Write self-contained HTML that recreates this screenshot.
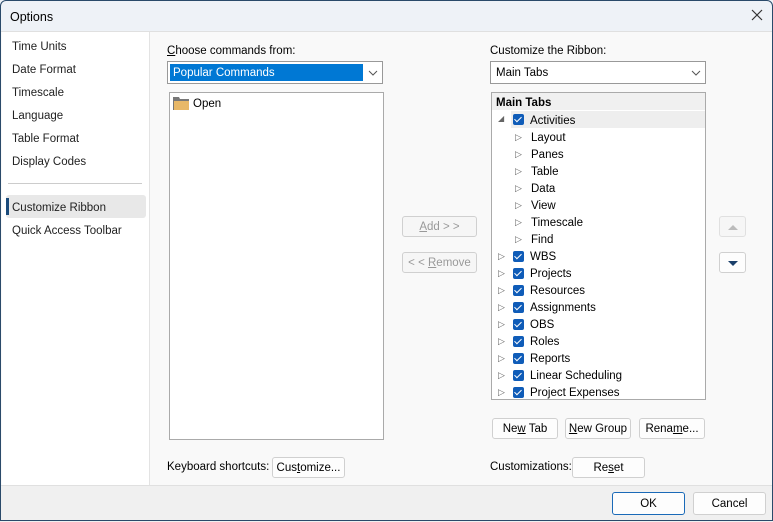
<!DOCTYPE html><html><head><style>
body{margin:0;width:773px;height:521px;overflow:hidden;font-family:"Liberation Sans",sans-serif;font-size:11.5px;color:#000;background:#f9f9f9;position:relative}
.a{position:absolute}
.t{margin-top:1px}
.btn{position:absolute;background:#fdfdfd;border:1px solid #d0d0d0;border-radius:3px;text-align:center;box-sizing:border-box;line-height:21px}
.nav{position:absolute;left:12px;color:#222;margin-top:1px}
.cb{position:absolute;width:11px;height:11px;background:#0f5cb8;border-radius:2px;margin-top:1px}
.cb:after{content:"";position:absolute;left:3px;top:1px;width:3px;height:6px;border:solid #fff;border-width:0 1px 1px 0;transform:rotate(45deg)}
.tri{position:absolute;color:#666;font-size:9px}
</style></head><body>
<div class="a" style="left:0;top:0;width:773px;height:31px;background:#eef2f7;border-bottom:1px solid #e0e0e0"></div>
<div class="a" style="left:10px;top:10px;font-size:12.5px">Options</div>
<svg class="a" style="left:751px;top:9px" width="12" height="12"><path d="M1 1L11 11M11 1L1 11" stroke="#333" stroke-width="1.2"/></svg>
<div class="a" style="left:2px;top:32px;width:147px;height:454px;background:#fff;border-right:1px solid #e3e3e3"></div>
<div class="nav" style="top:40px">Time Units</div>
<div class="nav" style="top:63px">Date Format</div>
<div class="nav" style="top:86px">Timescale</div>
<div class="nav" style="top:109px">Language</div>
<div class="nav" style="top:132px">Table Format</div>
<div class="nav" style="top:155px">Display Codes</div>
<div class="a" style="left:8px;top:183px;width:134px;height:1px;background:#ccc"></div>
<div class="a" style="left:6px;top:195px;width:140px;height:23px;background:#e8e8e8;border-radius:3px"></div>
<div class="a" style="left:6px;top:198px;width:3px;height:17px;background:#1a4a7a"></div>
<div class="nav" style="top:201px">Customize Ribbon</div>
<div class="nav" style="top:224px">Quick Access Toolbar</div>

<div class="a t" style="left:167px;top:44px"><u>C</u>hoose commands from:</div>
<div class="a" style="left:167px;top:61px;width:216px;height:23px;background:#fff;border:1px solid #999;box-sizing:border-box"></div>
<div class="a" style="left:170px;top:64px;width:193px;height:17px;background:#0078d4;color:#fff;line-height:19px;padding-left:3px;box-sizing:border-box">Popular Commands</div>
<svg class="a" style="left:368px;top:70px" width="10" height="6"><path d="M1 1L5 5L9 1" stroke="#555" fill="none"/></svg>
<div class="a" style="left:169px;top:92px;width:215px;height:348px;background:#fff;border:1px solid #aaa;box-sizing:border-box"></div>
<svg class="a" style="left:173px;top:96px" width="17" height="14"><path d="M0 1h6l1 2h9v11H0z" fill="#777"/><path d="M1 5h15v9H1z" fill="#e8b868"/></svg>
<div class="a t" style="left:193px;top:97px">Open</div>

<div class="btn" style="left:402px;top:216px;width:75px;height:21px;color:#999;background:#f6f6f6"><u>A</u>dd &gt; &gt;</div>
<div class="btn" style="left:402px;top:252px;width:75px;height:21px;color:#999;background:#f6f6f6">&lt; &lt; <u>R</u>emove</div>

<div class="a t" style="left:490px;top:44px">Customize the Ribbon:</div>
<div class="a" style="left:490px;top:61px;width:216px;height:23px;background:#fff;border:1px solid #999;box-sizing:border-box;padding:5px 5px">Main Tabs</div>
<svg class="a" style="left:691px;top:70px" width="10" height="6"><path d="M1 1L5 5L9 1" stroke="#555" fill="none"/></svg>
<div class="a" style="left:491px;top:92px;width:215px;height:308px;background:#fff;border:1px solid #aaa;box-sizing:border-box"></div>
<div class="a" style="left:492px;top:93px;width:213px;height:17px;background:#f0f0f0"></div>
<div class="a t" style="left:496px;top:96px;font-weight:bold">Main Tabs</div>
<div class="a" style="left:511px;top:111px;width:194px;height:17px;background:#eeeeee"></div>
<div class="a" style="left:498px;top:114px;color:#666;font-size:8px">◢</div>
<div class="cb" style="left:513px;top:113px"></div><div class="a t" style="left:530px;top:114px">Activities</div>
<div class="tri" style="left:515px;top:132px">▷</div><div class="a t" style="left:531px;top:131px">Layout</div>
<div class="tri" style="left:515px;top:149px">▷</div><div class="a t" style="left:531px;top:148px">Panes</div>
<div class="tri" style="left:515px;top:166px">▷</div><div class="a t" style="left:531px;top:165px">Table</div>
<div class="tri" style="left:515px;top:183px">▷</div><div class="a t" style="left:531px;top:182px">Data</div>
<div class="tri" style="left:515px;top:200px">▷</div><div class="a t" style="left:531px;top:199px">View</div>
<div class="tri" style="left:515px;top:217px">▷</div><div class="a t" style="left:531px;top:216px">Timescale</div>
<div class="tri" style="left:515px;top:234px">▷</div><div class="a t" style="left:531px;top:233px">Find</div>
<div class="tri" style="left:498px;top:251px">▷</div><div class="cb" style="left:513px;top:250px"></div><div class="a t" style="left:530px;top:250px">WBS</div>
<div class="tri" style="left:498px;top:268px">▷</div><div class="cb" style="left:513px;top:267px"></div><div class="a t" style="left:530px;top:267px">Projects</div>
<div class="tri" style="left:498px;top:285px">▷</div><div class="cb" style="left:513px;top:284px"></div><div class="a t" style="left:530px;top:284px">Resources</div>
<div class="tri" style="left:498px;top:302px">▷</div><div class="cb" style="left:513px;top:301px"></div><div class="a t" style="left:530px;top:301px">Assignments</div>
<div class="tri" style="left:498px;top:319px">▷</div><div class="cb" style="left:513px;top:318px"></div><div class="a t" style="left:530px;top:318px">OBS</div>
<div class="tri" style="left:498px;top:336px">▷</div><div class="cb" style="left:513px;top:335px"></div><div class="a t" style="left:530px;top:335px">Roles</div>
<div class="tri" style="left:498px;top:353px">▷</div><div class="cb" style="left:513px;top:352px"></div><div class="a t" style="left:530px;top:352px">Reports</div>
<div class="tri" style="left:498px;top:370px">▷</div><div class="cb" style="left:513px;top:369px"></div><div class="a t" style="left:530px;top:369px">Linear Scheduling</div>
<div class="tri" style="left:498px;top:387px">▷</div><div class="cb" style="left:513px;top:386px"></div><div class="a t" style="left:530px;top:386px">Project Expenses</div>

<div class="btn" style="left:719px;top:216px;width:27px;height:21px;background:#f6f6f6;border-color:#e0e0e0"><svg width="10" height="6" style="margin-top:7px;vertical-align:top"><path d="M0 6L5 1L10 6z" fill="#bbb"/></svg></div>
<div class="btn" style="left:719px;top:252px;width:27px;height:21px"><svg width="10" height="6" style="margin-top:8px;vertical-align:top"><path d="M0 0L5 5L10 0z" fill="#1a3f6a"/></svg></div>

<div class="btn" style="left:492px;top:418px;width:66px;height:21px">Ne<u>w</u> Tab</div>
<div class="btn" style="left:565px;top:418px;width:66px;height:21px"><u>N</u>ew Group</div>
<div class="btn" style="left:639px;top:418px;width:66px;height:21px">Rena<u>m</u>e...</div>

<div class="a t" style="left:167px;top:460px">Keyboard shortcuts:</div>
<div class="btn" style="left:272px;top:457px;width:73px;height:21px">Cus<u>t</u>omize...</div>
<div class="a t" style="left:490px;top:460px">Customizations:</div>
<div class="btn" style="left:572px;top:457px;width:73px;height:21px">Re<u>s</u>et</div>

<div class="a" style="left:0;top:485px;width:773px;height:36px;background:#f0f0f0;border-top:1px solid #e0e0e0"></div>
<div class="btn" style="left:612px;top:492px;width:73px;height:23px;line-height:23px;border:1px solid #1a6ab8">OK</div>
<div class="btn" style="left:693px;top:492px;width:73px;height:23px;line-height:23px">Cancel</div>
<div class="a" style="left:0;top:0;width:773px;height:521px;box-sizing:border-box;border:1px solid #2a4a6a;border-radius:6px 6px 0 0"></div>
</body></html>
